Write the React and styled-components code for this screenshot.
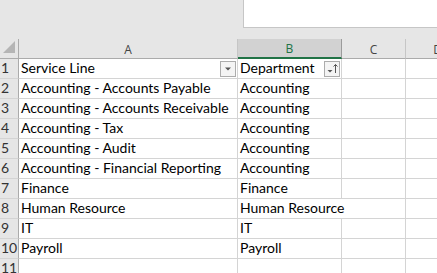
import React from 'react';
import styled, { createGlobalStyle } from 'styled-components';

const GlobalStyle = createGlobalStyle`
    html, body {
        margin: 0;
        padding: 0;
        background: #ffffff;
        overflow: hidden;
    }
    body {
        font-family: Lato, 'Liberation Sans', sans-serif;
    }
`;

const COLS = ['A', 'B', 'C', 'D'];

const ROWS = [
    ['Service Line', 'Department'],
    ['Accounting - Accounts Payable', 'Accounting'],
    ['Accounting - Accounts Receivable', 'Accounting'],
    ['Accounting - Tax', 'Accounting'],
    ['Accounting - Audit', 'Accounting'],
    ['Accounting - Financial Reporting', 'Accounting'],
    ['Finance', 'Finance'],
    ['Human Resource', 'Human Resource'],
    ['IT', 'IT'],
    ['Payroll', 'Payroll'],
    ['', ''],
];

const Window = styled.div`
    width: 437px;
    height: 273px;
    background: #e6e6e6;
    display: flex;
    flex-direction: column;
    overflow: hidden;
`;

const TopStrip = styled.div`
    height: 39px;
    flex: none;
    display: flex;
    justify-content: flex-end;
    align-items: flex-start;
`;

const FormulaBox = styled.div`
    width: 194px;
    height: 28px;
    background: #ffffff;
    border-left: 1px solid #c6c6c6;
    border-bottom: 1px solid #c6c6c6;
    box-sizing: border-box;
`;

const Sheet = styled.div`
    display: grid;
    grid-template-columns: 19px 219px 104px 64px 64px;
    grid-auto-rows: 20px;
    background: #ffffff;
    flex: 1;
    overflow: hidden;
`;

const Corner = styled.div`
    background: #e6e6e6;
    border-right: 1px solid #ababab;
    border-bottom: 1px solid #ababab;
    box-sizing: border-box;
    display: flex;
    justify-content: flex-end;
    align-items: flex-end;
    padding: 0 3px 5px 0;
`;

const ColHead = styled.div`
    background: ${(p) => (p.$active ? '#d2d2d2' : '#e6e6e6')};
    color: ${(p) => (p.$active ? '#217346' : '#444444')};
    border-right: 1px solid ${(p) => (p.$active ? '#9b9b9b' : '#c6c6c6')};
    border-bottom: ${(p) => (p.$active ? '2px solid #217346' : '1px solid #ababab')};
    box-sizing: border-box;
    display: flex;
    align-items: center;
    justify-content: center;
    font-family: 'Open Sans', 'Liberation Sans', sans-serif;
    font-size: 12px;
    padding-top: 1px;
`;

const RowHead = styled.div`
    background: #e6e6e6;
    color: #333333;
    border-right: 1px solid #ababab;
    border-bottom: 1px solid #d4d4d4;
    box-sizing: border-box;
    display: flex;
    align-items: flex-end;
    padding: 0 0 1px 1px;
    font-size: 14px;
    line-height: 18px;
    overflow: hidden;
`;

const Cell = styled.div`
    position: relative;
    grid-column: span ${(p) => p.$span || 1};
    border-right: 1px solid #d4d4d4;
    border-bottom: 1px solid #d4d4d4;
    box-sizing: border-box;
    display: flex;
    align-items: flex-end;
    padding: 0 0 1px 2px;
    font-size: 14px;
    line-height: 18px;
    color: #000000;
    white-space: nowrap;
    overflow: hidden;
`;

const FilterButton = styled.span`
    position: absolute;
    right: 1px;
    top: 2px;
    width: 16px;
    height: 16px;
    box-sizing: border-box;
    border: 1px solid #acacac;
    background: #f4f4f4;
    display: flex;
    align-items: center;
    justify-content: center;
`;

const CornerMark = () => (
    <svg width="12" height="12" viewBox="0 0 12 12">
        <polygon points="12,0 12,12 0,12" fill="#b5b5b5" />
    </svg>
);

const FilterIcon = ({ sorted }) =>
    sorted ? (
        <svg width="14" height="14" viewBox="0 0 14 14">
            <polygon points="2.5,8 7.5,8 5,10.5" fill="#555555" />
            <line x1="10.5" y1="2.5" x2="10.5" y2="11" stroke="#555555" strokeWidth="1" />
            <polyline points="8.5,4.5 10.5,2.5 12.5,4.5" fill="none" stroke="#555555" strokeWidth="1" />
        </svg>
    ) : (
        <svg width="14" height="14" viewBox="0 0 14 14">
            <polygon points="4,5.5 10,5.5 7,8.5" fill="#555555" />
        </svg>
    );

const App = () => {
    return (
        <>
            <GlobalStyle />
            <Window>
                <TopStrip>
                    <FormulaBox />
                </TopStrip>
                <Sheet>
                    <Corner>
                        <CornerMark />
                    </Corner>
                    {COLS.map((c) => (
                        <ColHead key={c} $active={c === 'B'}>
                            {c}
                        </ColHead>
                    ))}
                    {ROWS.map((row, i) => {
                        // text in B spills into the empty C column when it is too long
                        const spill = row[1].length > 12;
                        return (
                            <React.Fragment key={i}>
                                <RowHead>{i + 1}</RowHead>
                                <Cell>
                                    {row[0]}
                                    {i === 0 && (
                                        <FilterButton>
                                            <FilterIcon />
                                        </FilterButton>
                                    )}
                                </Cell>
                                <Cell $span={spill ? 2 : 1}>
                                    {row[1]}
                                    {i === 0 && (
                                        <FilterButton>
                                            <FilterIcon sorted />
                                        </FilterButton>
                                    )}
                                </Cell>
                                {!spill && <Cell />}
                                <Cell />
                            </React.Fragment>
                        );
                    })}
                </Sheet>
            </Window>
        </>
    );
};

export default App;
